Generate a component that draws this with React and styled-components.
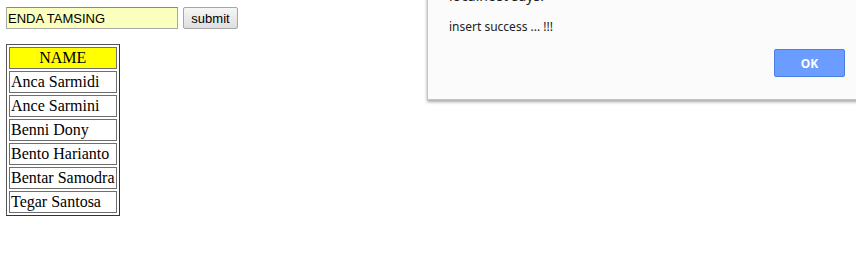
import React from "react";
import styled, {createGlobalStyle} from "styled-components";

const GlobalStyle = createGlobalStyle`
  html, body {
    margin: 0;
    background: #ffffff;
  }
  body {
    font-family: "Liberation Serif", "Times New Roman", serif;
    overflow: hidden;
  }
`;

const Page = styled.div`
  position: relative;
  width: 856px;
  height: 257px;
  padding: 7px 6px;
  box-sizing: border-box;
`;

const Form = styled.form`
  display: flex;
  align-items: center;
  gap: 5px;
  margin: 0;
`;

const NameInput = styled.input`
  box-sizing: border-box;
  width: 172px;
  height: 22px;
  margin: 0;
  padding: 0 1px;
  border: 1px solid #a9a9a9;
  border-top-color: #8a8a8a;
  background: #faffbd;
  font-family: "Liberation Sans", Arial, sans-serif;
  font-size: 13px;
  color: #000;
  outline: none;
`;

const SubmitButton = styled.button`
  box-sizing: border-box;
  width: 55px;
  height: 22px;
  margin: 0;
  padding: 0;
  border: 1px solid #a6a6a6;
  border-radius: 2px;
  background: linear-gradient(#f6f6f6, #dedede);
  font-family: "Liberation Sans", Arial, sans-serif;
  font-size: 13px;
  color: #000;
`;

const NameTable = styled.table`
  margin-top: 15px;
  border: 1px solid #555;
  border-right-color: #333;
  border-bottom-color: #333;
  border-spacing: 2px;
  font-size: 16px;
  line-height: 18px;
`;

const Cell = styled.td`
  border: 1px solid #6e6e6e;
  padding: 1px;
  height: 18px;
  white-space: nowrap;
  text-align: ${props => props.head ? "center" : "left"};
  background: ${props => props.head ? "#ffff00" : "transparent"};
  color: #000;
`;

const Dialog = styled.div`
  position: absolute;
  left: 427px;
  top: -34px;
  width: 450px;
  box-sizing: border-box;
  padding: 20px 31px 22px 21px;
  background: #fbfbfb;
  border: 1px solid #c4c4c4;
  box-shadow: 0 2px 3px rgba(0, 0, 0, 0.35);
  font-family: "Noto Sans", "DejaVu Sans", sans-serif;
  color: #222;
`;

const DialogTitle = styled.div`
  font-size: 14px;
  line-height: 17px;
`;

const DialogMessage = styled.div`
  margin-top: 14px;
  font-size: 12px;
  line-height: 17px;
`;

const DialogActions = styled.div`
  display: flex;
  justify-content: flex-end;
  margin-top: 14px;
`;

const OkButton = styled.button`
  box-sizing: border-box;
  width: 71px;
  height: 28px;
  padding: 0;
  border: 1px solid #4a7fe0;
  border-radius: 2px;
  background: #6a9dff;
  color: #fff;
  font-family: "Noto Sans", "DejaVu Sans", sans-serif;
  font-weight: bold;
  font-size: 12px;
`;

const names = [
  "Anca Sarmidi",
  "Ance Sarmini",
  "Benni Dony",
  "Bento Harianto",
  "Bentar Samodra",
  "Tegar Santosa"
];

function App() {
  return (
    <Page>
      <GlobalStyle/>
      <Form onSubmit={e => e.preventDefault()}>
        <NameInput type="text" defaultValue="ENDA TAMSING"/>
        <SubmitButton type="submit">submit</SubmitButton>
      </Form>
      <NameTable>
        <tbody>
        <tr>
          <Cell head>NAME</Cell>
        </tr>
        {names.map(name => (
          <tr key={name}>
            <Cell>{name}</Cell>
          </tr>
        ))}
        </tbody>
      </NameTable>
      {/* browser alert box, cut off at the top of the shot */}
      <Dialog>
        <DialogTitle>localhost says:</DialogTitle>
        <DialogMessage>insert success ... !!!</DialogMessage>
        <DialogActions>
          <OkButton>OK</OkButton>
        </DialogActions>
      </Dialog>
    </Page>
  );
}

export default App;
